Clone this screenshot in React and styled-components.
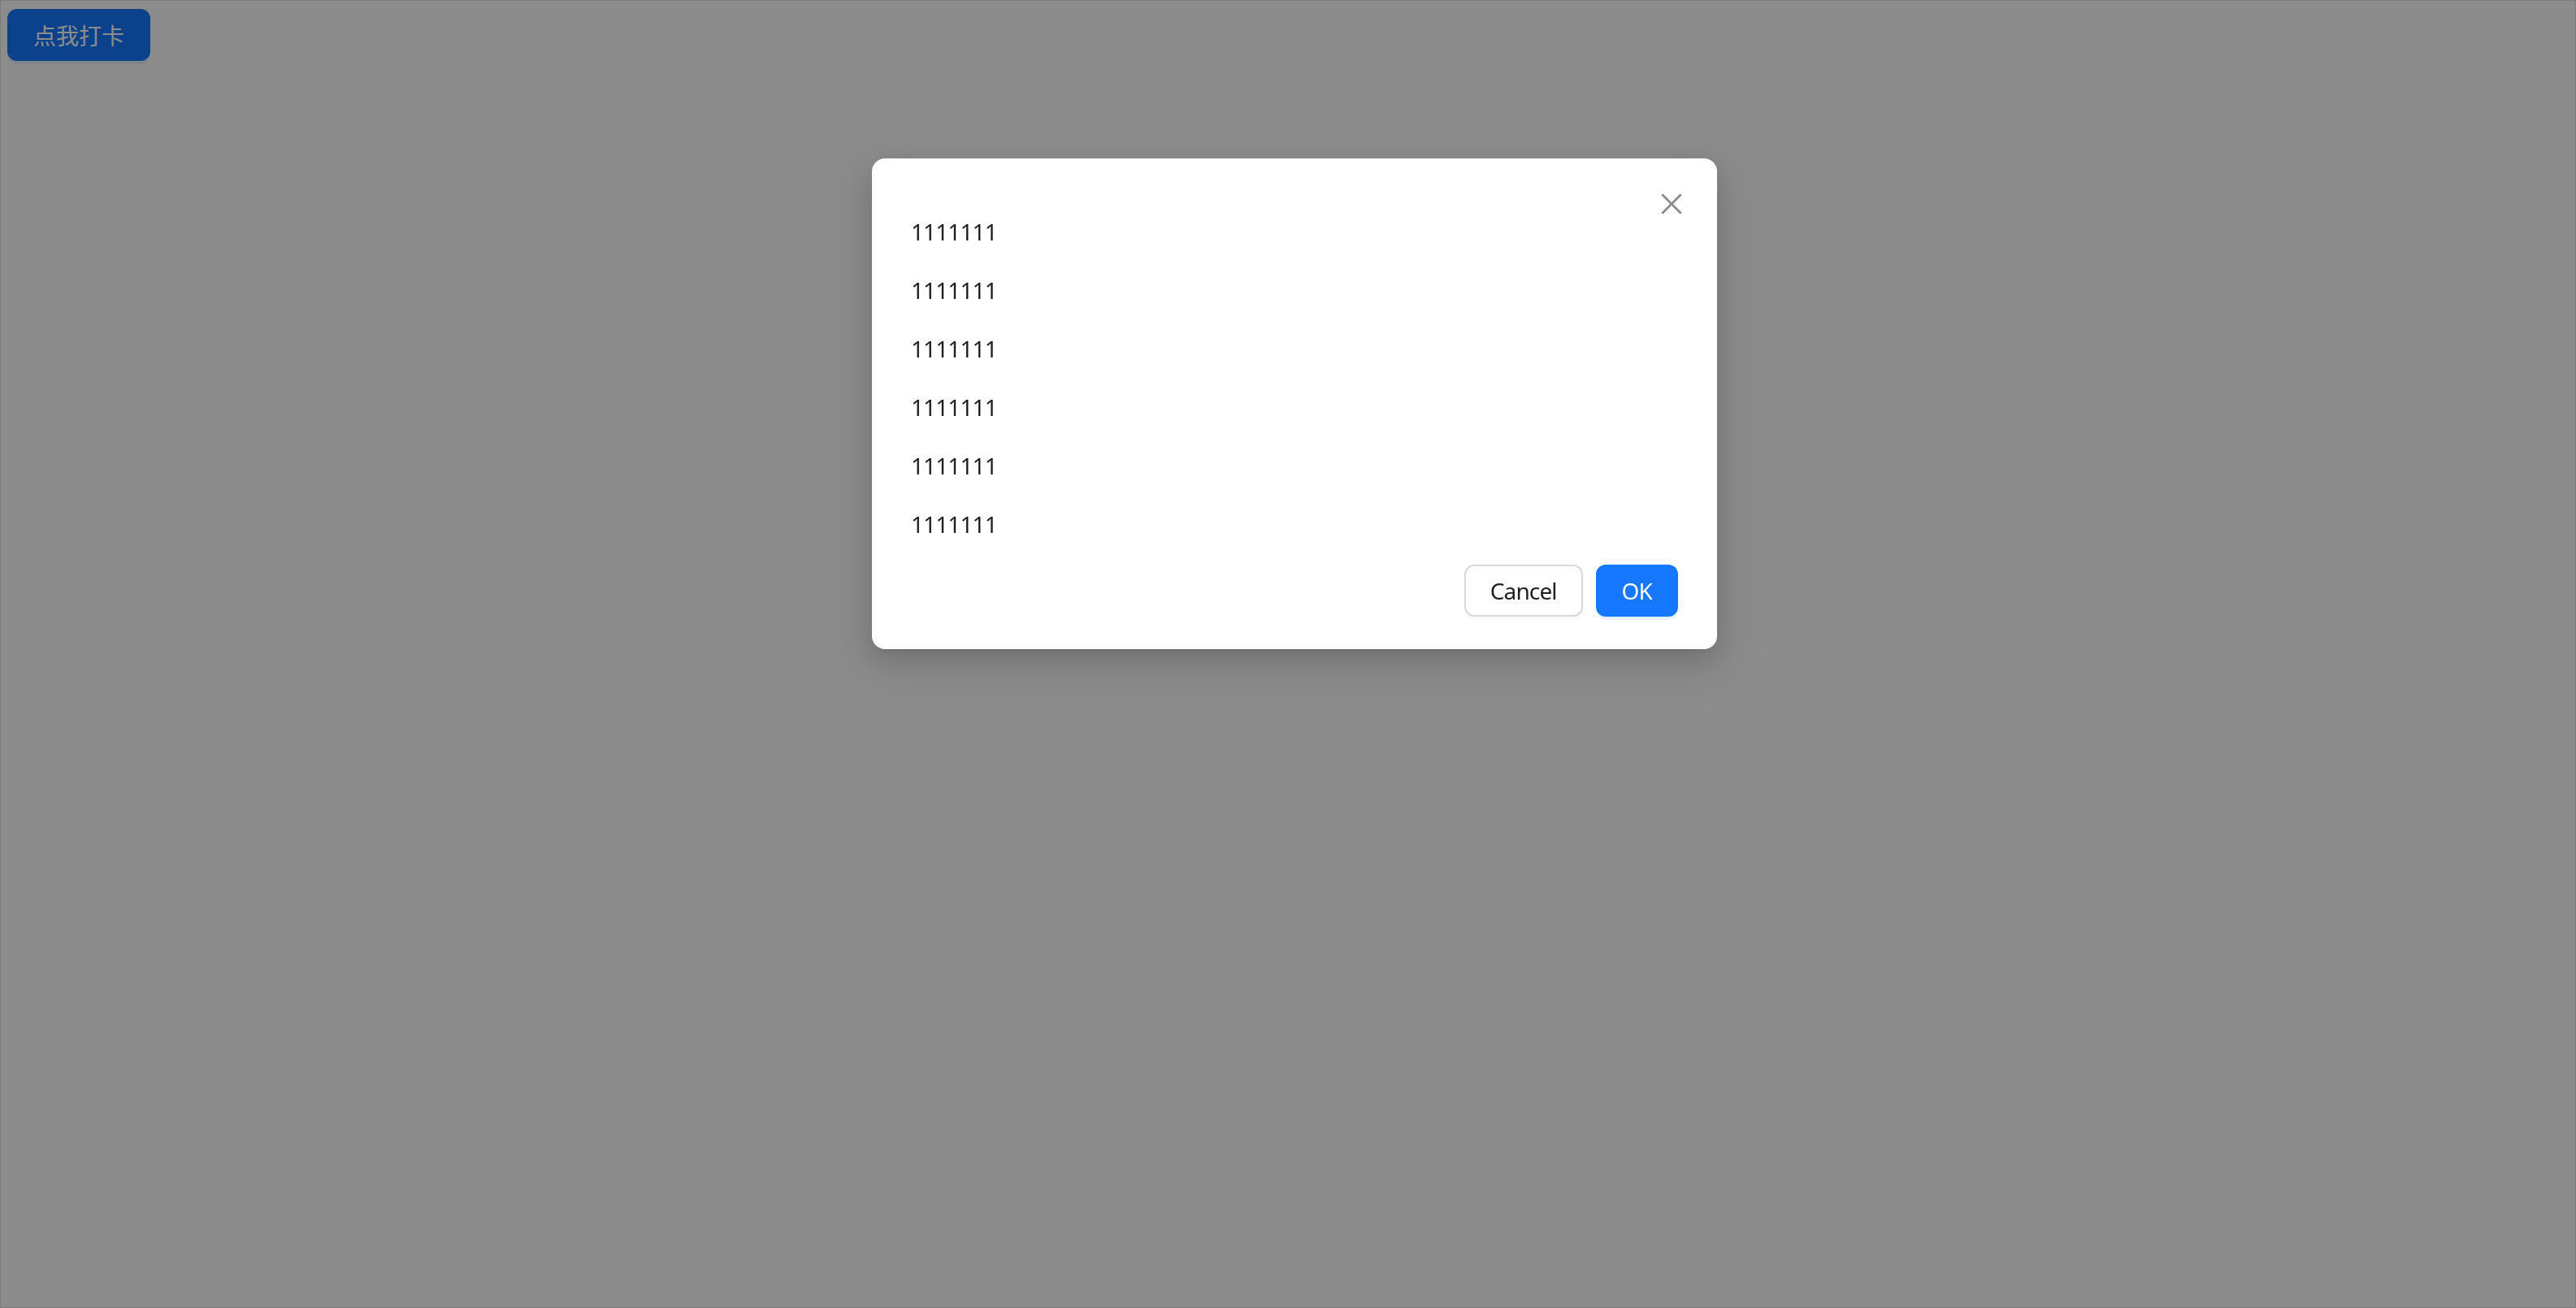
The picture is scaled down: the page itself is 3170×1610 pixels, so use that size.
import React from "react";
import styled, { createGlobalStyle } from "styled-components";

const Global = createGlobalStyle`
  html, body {
    margin: 0;
    padding: 0;
    background: #ffffff;
    font-family: "Noto Sans", "Open Sans", "Noto Sans CJK SC", sans-serif;
  }
  * { box-sizing: border-box; }
`;

const Page = styled.div`
  padding: 11px 0 0 9px;
  height: 1610px;
`;

const PrimaryButton = styled.button`
  height: 64px;
  padding: 8px 30px;
  border: 2px solid ${(p) => (p.$primary ? "#1677ff" : "#d9d9d9")};
  border-radius: 12px;
  background: ${(p) => (p.$primary ? "#1677ff" : "#ffffff")};
  color: ${(p) => (p.$primary ? "#ffffff" : "rgba(0,0,0,0.88)")};
  font-family: "Noto Sans", "Open Sans", "Noto Sans CJK SC", sans-serif;
  font-size: 28px;
  line-height: 44px;
  letter-spacing: -0.9px;
  cursor: pointer;
  box-shadow: ${(p) =>
    p.$primary ? "0 4px 0 rgba(5,145,255,0.1)" : "0 4px 0 rgba(0,0,0,0.02)"};
  white-space: nowrap;
`;

const TriggerLabel = styled.span`
  font-family: "Noto Sans CJK SC", sans-serif;
  letter-spacing: 0;
`;

const Mask = styled.div`
  position: fixed;
  inset: 0;
  background: rgba(0, 0, 0, 0.45);
  border: 1px solid rgba(0, 0, 0, 0.12);
`;

const Wrap = styled.div`
  position: fixed;
  inset: 0;
  display: flex;
  justify-content: center;
  align-items: flex-start;
  padding: 195px 0 0 16px;
`;

const Modal = styled.div`
  position: relative;
  width: 1040px;
  background: #ffffff;
  border-radius: 16px;
  padding: 40px 48px;
  box-shadow: 0 12px 32px 0 rgba(0, 0, 0, 0.12),
    0 6px 12px -8px rgba(0, 0, 0, 0.16),
    0 18px 56px 16px rgba(0, 0, 0, 0.09);
  color: rgba(0, 0, 0, 0.88);
  font-size: 28px;
  line-height: 44px;
`;

const Close = styled.button`
  position: absolute;
  top: 34px;
  right: 34px;
  width: 44px;
  height: 44px;
  padding: 0;
  border: 0;
  border-radius: 8px;
  background: transparent;
  display: flex;
  align-items: center;
  justify-content: center;
  cursor: pointer;
`;

const Body = styled.div``;

const Line = styled.p`
  margin: 28px 0;
  letter-spacing: -0.9px;
`;

const Footer = styled.div`
  margin-top: 24px;
  display: flex;
  justify-content: flex-end;
  gap: 16px;
`;

export default function App() {
  return (
    <>
      <Global />
      <Page>
        <PrimaryButton $primary>
          <TriggerLabel>点我打卡</TriggerLabel>
        </PrimaryButton>
      </Page>
      <Mask />
      <Wrap>
        <Modal>
          <Close aria-label="Close">
            <svg width="32" height="32" viewBox="0 0 32 32">
              <path
                d="M4.3 4.3 L27.7 27.7 M27.7 4.3 L4.3 27.7"
                stroke="rgba(0,0,0,0.45)"
                strokeWidth="2.8"
                fill="none"
              />
            </svg>
          </Close>
          <Body>
            {Array.from({ length: 6 }).map((_, i) => (
              <Line key={i}>1111111</Line>
            ))}
          </Body>
          <Footer>
            <PrimaryButton>Cancel</PrimaryButton>
            <PrimaryButton $primary>OK</PrimaryButton>
          </Footer>
        </Modal>
      </Wrap>
    </>
  );
}
